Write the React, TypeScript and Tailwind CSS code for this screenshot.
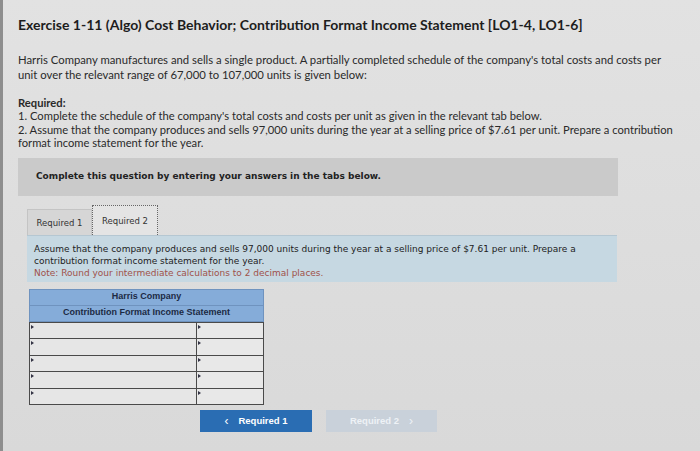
import React from 'react';

const rows = [0, 1, 2, 3, 4];

function Marker() {
    return <span className="absolute left-[1px] top-[2px] w-0 h-0 border-y-[2px] border-y-transparent border-l-[3px] border-l-[#334]" />;
}

export default function App() {
    return (
        <div className="w-[700px] h-[451px] overflow-hidden bg-gradient-to-b from-[#e2e2e2] to-[#d9d9d9] border-l-[3px] border-[#8e8e8e] text-[#222] relative">
            <div className="pl-[15px] pt-[14px]" style={{ fontFamily: 'Lato, "Liberation Sans", sans-serif' }}>
                <h1 className="text-[14px] font-bold leading-[22px] text-[#1d1d1d]">
                    Exercise 1-11 (Algo) Cost Behavior; Contribution Format Income Statement [LO1-4, LO1-6]
                </h1>
                <p className="mt-[16px] w-[650px] text-[11.3px] leading-[15px] text-[#2a2a2a]">
                    Harris Company manufactures and sells a single product. A partially completed schedule of the company's total costs and costs per unit over the relevant range of 67,000 to 107,000 units is given below:
                </p>
                <p className="mt-[14px] text-[11.2px] leading-[13px] font-bold text-[#2a2a2a]">Required:</p>
                <p className="w-[668px] text-[11.2px] leading-[13.5px] text-[#2a2a2a]">
                    1. Complete the schedule of the company's total costs and costs per unit as given in the relevant tab below.
                    <br />
                    2. Assume that the company produces and sells 97,000 units during the year at a selling price of $7.61 per unit. Prepare a contribution format income statement for the year.
                </p>
            </div>

            <div className="ml-[15px] mt-[8px] w-[600px] h-[38px] bg-[#cacaca] flex items-center pl-[18px]" style={{ fontFamily: '"DejaVu Sans", Verdana, sans-serif' }}>
                <span className="text-[9px] font-bold text-[#222]">Complete this question by entering your answers in the tabs below.</span>
            </div>

            <div className="ml-[24px] mt-[9px]" style={{ fontFamily: '"DejaVu Sans", Verdana, sans-serif' }}>
                <div className="flex items-end h-[30px]">
                    <div className="w-[65px] h-[26px] bg-[#d6d6d6] border border-[#c4c4c4] border-b-0 flex items-center justify-center pt-[2px] text-[8.5px] text-[#333]">
                        Required 1
                    </div>
                    <div className="w-[66px] h-[30px] bg-[#e4e4e4] border border-dotted border-[#666] border-b-0 flex items-center justify-center pt-[2px] text-[8.5px] text-[#333]">
                        Required 2
                    </div>
                </div>
                <div className="w-[590px] h-[47px] bg-[#c6d8e2] border-t border-[#b5c7d2] px-[7px] pt-[7px] text-[9px] leading-[12px]">
                    <p className="text-[#222]">
                        Assume that the company produces and sells 97,000 units during the year at a selling price of $7.61 per unit. Prepare a contribution format income statement for the year.
                    </p>
                    <p className="text-[#a0524a]">Note: Round your intermediate calculations to 2 decimal places.</p>
                </div>

                <div className="ml-[2px] mt-[7px] w-[235px]" style={{ fontFamily: '"Liberation Sans", Arial, sans-serif' }}>
                    <div className="h-[17px] bg-[#85acd9] border border-[#6f93bf] flex items-center justify-center text-[9px] font-bold text-[#1c2a44]">
                        Harris Company
                    </div>
                    <div className="h-[16px] bg-[#85acd9] border-x border-b border-[#6f93bf] flex items-center justify-center text-[9px] font-bold text-[#1c2a44]">
                        Contribution Format Income Statement
                    </div>
                    <div className="border border-[#4a4a4a] border-t-0">
                        {rows.map((r) => (
                            <div key={r} className="flex h-[16.5px] border-t border-[#4a4a4a]">
                                <div className="relative w-[167px] bg-[#e6e6e6] border-r border-[#4a4a4a]">
                                    <Marker />
                                </div>
                                <div className="relative flex-1 bg-[#e8e8e8]">
                                    <Marker />
                                </div>
                            </div>
                        ))}
                    </div>
                </div>

                <div className="flex gap-[14px] ml-[173px] mt-[5px]" style={{ fontFamily: '"Liberation Sans", Arial, sans-serif' }}>
                    <div className="w-[112px] h-[22px] bg-[#2a6db3] flex items-center justify-center gap-[10px] text-white text-[9.5px] font-bold">
                        <span className="text-[12px] font-normal leading-none">‹</span>
                        <span>Required 1</span>
                    </div>
                    <div className="w-[111px] h-[22px] bg-[#c9d1da] flex items-center justify-center gap-[10px] text-[#eef2f6] text-[9.5px] font-bold">
                        <span>Required 2</span>
                        <span className="text-[12px] font-normal leading-none">›</span>
                    </div>
                </div>
            </div>
        </div>
    );
}
